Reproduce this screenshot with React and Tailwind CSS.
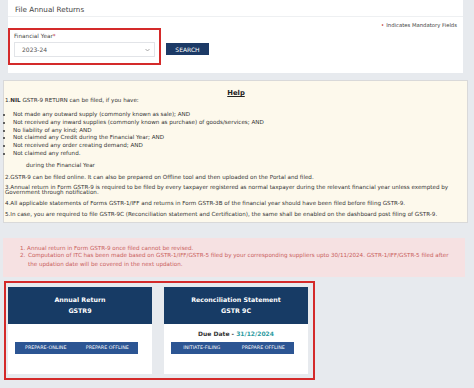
import React from 'react';

const bullets = [
  'Not made any outward supply (commonly known as sale); AND',
  'Not received any inward supplies (commonly known as purchase) of goods/services; AND',
  'No liability of any kind; AND',
  'Not claimed any Credit during the Financial Year; AND',
  'Not received any order creating demand; AND',
  'Not claimed any refund.',
];

function ReturnCard({ title, sub, due, buttons }) {
  return (
    <div className="w-[144px] h-[87px] bg-white flex flex-col">
      <div className="h-[37px] bg-[#173b65] flex flex-col items-center justify-center gap-[3px] text-white font-bold text-[6.3px] leading-[8px]">
        <div>{title}</div>
        <div>{sub}</div>
      </div>
      <div className="flex-1 flex flex-col pt-[6px]">
        <div className="h-[8px] text-center text-[6px] leading-[8px] font-bold text-[#333]">
          {due && (
            <>
              Due Date - <span className="text-[#2a9aa0]">{due}</span>
            </>
          )}
        </div>
        <div className="ml-[7px] mt-[4px] w-[123px] h-[12px] bg-[#2c5593] flex items-center text-white text-[4.8px]">
          {buttons.map((b) => (
            <span key={b} className="flex-1 text-center">{b}</span>
          ))}
        </div>
      </div>
    </div>
  );
}

export default function App() {
  return (
    <div className="w-[474px] h-[388px] bg-[#e7eaee] overflow-hidden text-[#333]" style={{ fontFamily: '"DejaVu Sans", Verdana, sans-serif' }}>
      <div className="ml-[8px] w-[455px] h-[73px] bg-white">
        <div className="h-[17px] border-b border-[#eef0f2] pl-[7px] pt-[5px] text-[7.2px] leading-[9px] text-[#444]">File Annual Returns</div>
        <div className="h-[11px] flex justify-end pr-[6px] pt-[5px] text-[5.3px] leading-[6px] text-[#444]">
          <span className="text-[#b22] mr-[2px]">•</span>Indicates Mandatory Fields
        </div>
        <div className="flex items-start">
          <div className="w-[153px] h-[37px] border-2 border-[#d42a2a] pl-[4px] pt-[3px]">
            <div className="text-[5.7px] leading-[6px] text-[#444]">Financial Year<span className="text-[#b22]">*</span></div>
            <div className="mt-[3px] w-[141px] h-[15px] border border-[#e2e4e8] flex items-center justify-between pl-[7px] pr-[4px] text-[6px] text-[#555]">
              <span>2023-24</span>
              <svg width="5" height="4" viewBox="0 0 10 6" fill="none" stroke="#888" strokeWidth="1.4">
                <path d="M1 1l4 4 4-4" />
              </svg>
            </div>
          </div>
          <div className="ml-[5px] mt-[15px] w-[43px] h-[12px] bg-[#1c3a66] text-white text-[6px] flex items-center justify-center">SEARCH</div>
        </div>
      </div>

      <div className="ml-[3px] mt-[7px] w-[465px] h-[143px] bg-[#fdf9ec] border border-[#d9d9d9] pl-[1px] text-[5.6px] leading-[8px] text-[#333]">
        <div className="text-center text-[6.8px] font-bold underline leading-[8px] pt-[8px] text-[#222]">Help</div>
        <div className="-mt-[1px]">1.<b>NIL</b> GSTR-9 RETURN can be filed, if you have:</div>
        <ul className="list-disc pl-[8px] mt-[7px] leading-[7.8px]">
          {bullets.map((b) => (
            <li key={b}>{b}</li>
          ))}
        </ul>
        <div className="pl-[21px] mt-[3px]">during the Financial Year</div>
        <div className="mt-[4px]">2.GSTR-9 can be filed online. It can also be prepared on Offline tool and then uploaded on the Portal and filed.</div>
        <div className="mt-[4.5px] leading-[5px]">3.Annual return in Form GSTR-9 is required to be filed by every taxpayer registered as normal taxpayer during the relevant financial year unless exempted by Government through notification.</div>
        <div className="mt-[3.5px]">4.All applicable statements of Forms GSTR-1/IFF and returns in Form GSTR-3B of the financial year should have been filed before filing GSTR-9.</div>
        <div className="mt-[3px]">5.In case, you are required to file GSTR-9C (Reconciliation statement and Certification), the same shall be enabled on the dashboard post filing of GSTR-9.</div>
      </div>

      <div className="ml-[3px] mt-[15px] w-[462px] h-[39px] bg-[#f6e1e2] pl-[17px] pr-[6px] pt-[7px] text-[5.6px] text-[#c9605c]">
        <div className="leading-[7px]">1. Annual return in Form GSTR-9 once filed cannot be revised.</div>
        <div className="flex leading-[9px] -mt-[1px]">
          <span className="w-[8px] shrink-0">2.</span>
          <span>Computation of ITC has been made based on GSTR-1/IFF/GSTR-5 filed by your corresponding suppliers upto 30/11/2024. GSTR-1/IFF/GSTR-5 filed after the updation date will be covered in the next updation.</span>
        </div>
      </div>

      <div className="ml-[4px] mt-[4px] w-[311px] h-[99px] border-2 border-[#d42a2a] flex gap-[12px] pl-[2px] pt-[4px]">
        <ReturnCard title="Annual Return" sub="GSTR9" buttons={['PREPARE-ONLINE', 'PREPARE OFFLINE']} />
        <ReturnCard title="Reconciliation Statement" sub="GSTR 9C" due="31/12/2024" buttons={['INITIATE-FILING', 'PREPARE OFFLINE']} />
      </div>
    </div>
  );
}
